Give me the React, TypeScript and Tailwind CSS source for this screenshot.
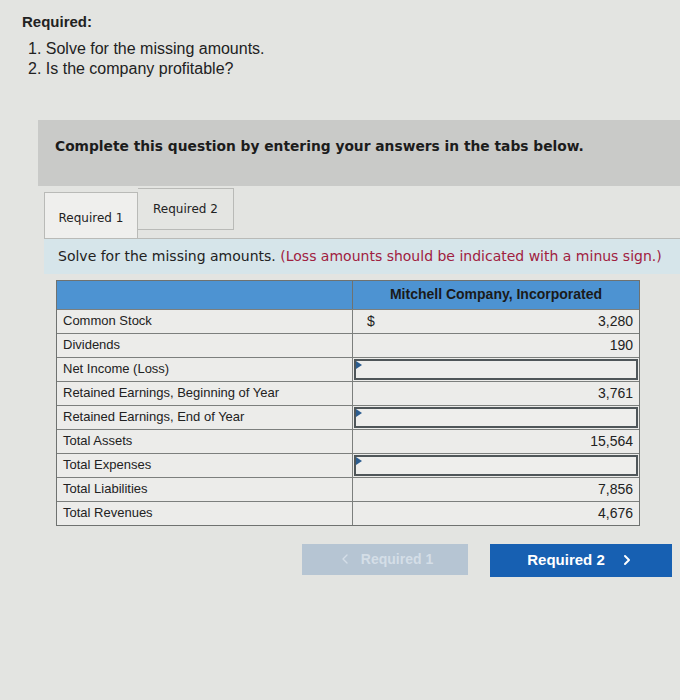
import { ChevronLeft, ChevronRight } from 'lucide-react';

const ROWS = [
  { label: 'Common Stock', value: '3,280', dollar: true },
  { label: 'Dividends', value: '190' },
  { label: 'Net Income (Loss)', input: true },
  { label: 'Retained Earnings, Beginning of Year', value: '3,761' },
  { label: 'Retained Earnings, End of Year', input: true },
  { label: 'Total Assets', value: '15,564' },
  { label: 'Total Expenses', input: true },
  { label: 'Total Liabilities', value: '7,856' },
  { label: 'Total Revenues', value: '4,676' },
];

export default function App() {
  return (
    <div className="w-[680px] h-[700px] overflow-hidden bg-[#e3e4e1] text-[#222] font-['Liberation_Sans',Arial,sans-serif]">
      <div className="pl-[22px] pt-[11px]">
        <h2 className="text-[15px] font-bold">Required:</h2>
        <ol className="mt-[5px] pl-[6px] text-[16px] leading-[20px]">
          <li>1. Solve for the missing amounts.</li>
          <li>2. Is the company profitable?</li>
        </ol>
      </div>

      <div className="ml-[38px] mt-[41px] h-[66px] bg-[#c9cac8] pl-[17px] pt-[17px]">
        <p className="font-['DejaVu_Sans',Verdana,sans-serif] font-bold text-[13.8px] leading-[18px] text-[#1c1c1c]">
          Complete this question by entering your answers in the tabs below.
        </p>
      </div>

      <div className="ml-[44px] mt-[6px] flex font-['DejaVu_Sans',Verdana,sans-serif] text-[12px]">
        <div className="w-[94px] h-[46px] bg-[#efefed] border border-[#b9bab7] border-b-0 flex items-center justify-center pt-[6px]">
          Required 1
        </div>
        <div className="w-[96px] h-[42px] mt-[-4px] bg-[#e4e5e2] border border-[#b9bab7] border-l-0 flex items-center justify-center">
          Required 2
        </div>
      </div>

      <div className="ml-[44px] h-[36px] bg-[#d6e5ea] border-t border-[#b9bab7] flex items-center pl-[14px] font-['DejaVu_Sans',Verdana,sans-serif] text-[14px]">
        <span>Solve for the missing amounts.&nbsp;</span>
        <span className="text-[#a0203f]">(Loss amounts should be indicated with a minus sign.)</span>
      </div>

      <div className="ml-[56px] mt-[6px] w-[584px] border border-[#6f7270] bg-[#ececea] text-[13px]">
        <div className="grid grid-cols-[296px_1fr] h-[28px] bg-[#4d93d2]">
          <div className="border-r border-[#6f7270]" />
          <div className="flex items-center justify-center font-bold text-[14px] text-[#1a1a1a]">
            Mitchell Company, Incorporated
          </div>
        </div>
        {ROWS.map((row) => (
          <div key={row.label} className="grid grid-cols-[296px_1fr] h-[24px] border-t border-[#7c7f7d]">
            <div className="border-r border-[#7c7f7d] flex items-center pl-[6px]">{row.label}</div>
            {row.input ? (
              <div className="relative m-[1px] border-2 border-[#4f5659] bg-[#eeeeec]">
                <span className="absolute left-0 top-0 w-0 h-0 border-y-[4px] border-y-transparent border-l-[6px] border-l-[#2c5d8f]" />
              </div>
            ) : (
              <div className="flex items-center justify-between pl-[14px] pr-[6px] text-[14px]">
                <span>{row.dollar ? '$' : ''}</span>
                <span>{row.value}</span>
              </div>
            )}
          </div>
        ))}
      </div>

      <div className="mt-[18px] flex justify-end gap-[22px] pr-[8px]">
        <button className="w-[166px] h-[31px] bg-[#b6c5d3] text-[#d4dee7] font-bold text-[14px] flex items-center justify-center gap-[8px]">
          <ChevronLeft className="w-4 h-4" strokeWidth={2} />
          Required 1
        </button>
        <button className="w-[182px] h-[33px] bg-[#1760b2] text-white font-bold text-[15px] flex items-center justify-center gap-[14px]">
          Required 2
          <ChevronRight className="w-4 h-4" strokeWidth={3} />
        </button>
      </div>
    </div>
  );
}
